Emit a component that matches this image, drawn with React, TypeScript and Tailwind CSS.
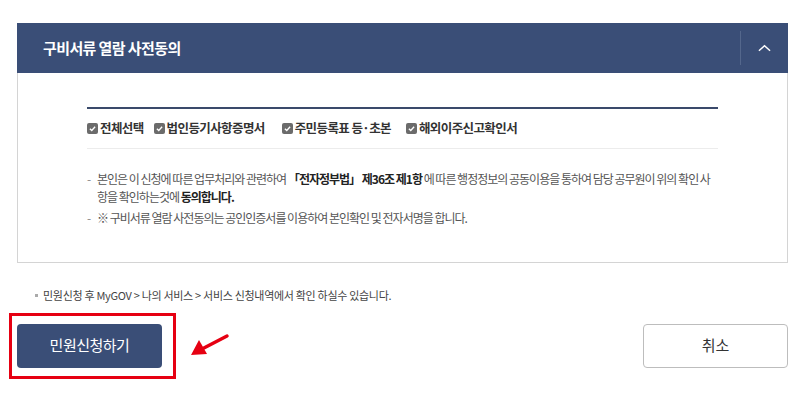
import React from "react";

const font = { fontFamily: '"Noto Sans CJK KR", "Noto Sans", sans-serif' };

function Check({ label }: { label: string }) {
  return (
    <span className="flex items-center gap-[2px]">
      <span className="flex h-[11px] w-[11px] items-center justify-center rounded-[2px] bg-[#6b6b6b]">
        <svg viewBox="0 0 12 12" className="h-[9px] w-[9px]">
          <path d="M2.5 6.2 L5 8.6 L9.5 3.6" fill="none" stroke="#fff" strokeWidth="1.8" />
        </svg>
      </span>
      <span className="text-[12.5px] font-bold tracking-[-0.6px] text-[#333]">{label}</span>
    </span>
  );
}

export default function App() {
  return (
    <div className="relative h-[402px] w-[800px] overflow-hidden bg-white" style={font}>
      <div className="pl-[17px] pr-[12px] pt-[23px]">
        <div className="flex h-[50px] items-center bg-[#3a4e77]">
          <h2 className="flex-1 pl-[26px] text-[15px] font-bold tracking-[-0.6px] text-white">
            구비서류 열람 사전동의
          </h2>
          <div className="h-[34px] w-px bg-[#54678c]" />
          <div className="flex w-[47px] items-center justify-center">
            <svg viewBox="0 0 14 8" className="h-[8px] w-[13px]">
              <path d="M1 7 L7 1.5 L13 7" fill="none" stroke="#fff" strokeWidth="1.6" />
            </svg>
          </div>
        </div>
        <div className="h-[190px] border-x border-b border-[#d4d4d4] px-[69px] pt-[34px]">
          <div className="h-[2px] bg-[#3a4a6b]" />
          <div className="flex h-[40px] items-center border-b border-[#ececec]">
            <Check label="전체선택" />
            <span className="w-[10px]" />
            <Check label="법인등기사항증명서" />
            <span className="w-[17px]" />
            <Check label="주민등록표 등·초본" />
            <span className="w-[15px]" />
            <Check label="해외이주신고확인서" />
          </div>
          <ul className="mt-[21px] text-[12px] tracking-[-1px] text-[#555]">
            <li className="flex leading-[18px]">
              <span className="w-[10px] shrink-0 text-[#888]">-</span>
              <span>
                본인은 이 신청에 따른 업무처리와 관련하여{" "}
                <b className="text-[#222]">「전자정부법」 제36조 제1항</b> 에 따른 행정정보의 공동이용을 통하여 담당 공무원이
                위의 확인 사항을 확인하는것에 <b className="text-[#222]">동의합니다.</b>
              </span>
            </li>
            <li className="mt-[3px] flex leading-[18px]">
              <span className="w-[10px] shrink-0 text-[#888]">-</span>
              <span>※ 구비서류 열람 사전동의는 공인인증서를 이용하여 본인확인 및 전자서명을 합니다.</span>
            </li>
          </ul>
        </div>
        <p className="mt-[24px] flex items-center pl-[18px] text-[11px] tracking-[-0.3px] text-[#444]">
          <span className="mr-[5px] h-[3px] w-[3px] bg-[#aaa]" />
          민원신청 후 MyGOV &gt; 나의 서비스 &gt; 서비스 신청내역에서 확인 하실수 있습니다.
        </p>
        <div className="mt-[20px] flex items-center justify-between">
          <button className="h-[44px] w-[145px] rounded-[4px] bg-[#3a4e77] text-[15px] tracking-[-0.5px] text-white">
            민원신청하기
          </button>
          <button className="h-[44px] w-[145px] rounded-[4px] border border-[#bdbdbd] bg-white text-[15px] text-[#333]">
            취소
          </button>
        </div>
      </div>
      <div className="absolute left-[9px] top-[313px] h-[66px] w-[167px] border-[3px] border-[#e60012]" />
      <svg className="absolute left-[188px] top-[330px]" width="44" height="30" viewBox="0 0 44 30">
        <path d="M39 6 L14 19" stroke="#e60012" strokeWidth="3.5" strokeLinecap="round" />
        <path d="M3 25 L11 10 L19 24 Z" fill="#e60012" />
      </svg>
    </div>
  );
}
